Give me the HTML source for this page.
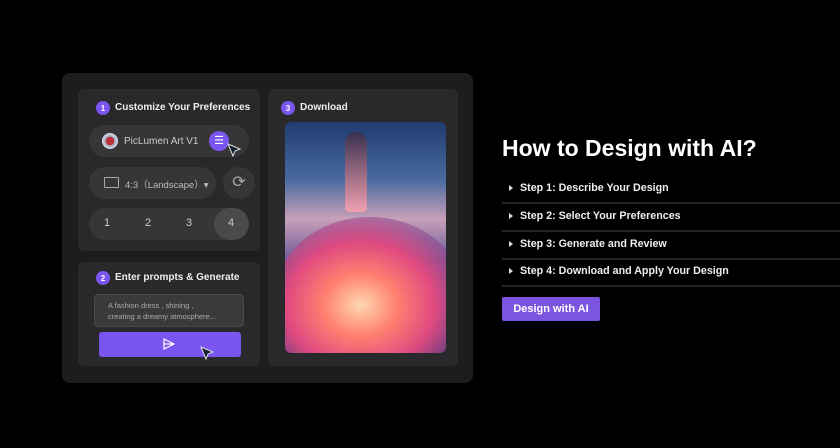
<!DOCTYPE html>
<html><head><style>
*{margin:0;padding:0;box-sizing:border-box}
body{width:840px;height:448px;background:#000;font-family:"Liberation Sans",sans-serif;position:relative;overflow:hidden;color:#fff}
.a{position:absolute}
.panel{left:62px;top:73px;width:411px;height:310px;background:#1d1d1f;border-radius:8px}
.card{background:#29292b;border-radius:6px}
.num{width:14px;height:14px;border-radius:50%;background:#7b55f0;font-size:8px;font-weight:bold;display:flex;align-items:center;justify-content:center}
.lbl{font-size:10px;font-weight:bold;color:#eee}
.pill{background:#363638;border-radius:18px;color:#bbb;font-size:10px}
.step{left:509px;font-size:10.7px;font-weight:bold;color:#eee}
.step:before{content:"";position:absolute;left:0;top:3px;border-left:4px solid #ddd;border-top:3px solid transparent;border-bottom:3px solid transparent}
.step span{margin-left:11px}
.line{left:502px;width:338px;height:2px;background:#252527}
</style></head><body>
<div class="a panel"></div>
<div class="a card" style="left:78px;top:89px;width:182px;height:162px"></div>
<div class="a card" style="left:78px;top:262px;width:182px;height:104px"></div>
<div class="a card" style="left:268px;top:89px;width:190px;height:277px"></div>

<div class="a num" style="left:96px;top:101px">1</div>
<div class="a lbl" style="left:115px;top:102px">Customize Your Preferences</div>
<div class="a pill" style="left:89px;top:125px;width:160px;height:32px"></div>
<div class="a" style="left:102px;top:133px;width:16px;height:16px;border-radius:50%;background:radial-gradient(circle,#c0303a 35%,#9ab 40%,#dde 70%)"></div>
<div class="a" style="left:124px;top:136px;font-size:10px;color:#ccc">PicLumen Art V1</div>
<div class="a" style="left:209px;top:131px;width:20px;height:20px;border-radius:50%;background:#7b55f0;color:#fff;font-size:11px;text-align:center;line-height:20px">☰</div>
<svg class="a" style="left:226px;top:142px" width="16" height="16" viewBox="0 0 16 16"><path d="M2 2L14 7L9 9L7 14Z" fill="#123" stroke="#ddd" stroke-width="1"/></svg>
<div class="a pill" style="left:89px;top:167px;width:127px;height:32px"></div>
<div class="a" style="left:104px;top:177px;width:15px;height:11px;border:1.5px solid #aaa;border-radius:1px"></div>
<div class="a" style="left:125px;top:177px;font-size:9.5px;color:#bbb">4:3（Landscape）▾</div>
<div class="a pill" style="left:223px;top:167px;width:32px;height:32px;text-align:center;line-height:32px;font-size:16px;color:#aaa">⟳</div>
<div class="a pill" style="left:89px;top:208px;width:160px;height:32px"></div>
<div class="a" style="left:214px;top:208px;width:35px;height:32px;border-radius:16px;background:#4a4a4c"></div>
<div class="a" style="left:104px;top:217px;font-size:11px;color:#ccc">1</div>
<div class="a" style="left:145px;top:217px;font-size:11px;color:#ccc">2</div>
<div class="a" style="left:186px;top:217px;font-size:11px;color:#ccc">3</div>
<div class="a" style="left:228px;top:217px;font-size:11px;color:#ccc">4</div>

<div class="a num" style="left:96px;top:271px">2</div>
<div class="a lbl" style="left:115px;top:272px">Enter prompts &amp; Generate</div>
<div class="a" style="left:94px;top:294px;width:150px;height:33px;background:#3a3a3c;border:1px solid #4a4a4c;border-radius:4px;font-size:7.5px;color:#aaa;padding:5px 0 0 13px;line-height:11px">A fashion dress , shining ,<br>creating a dreamy atmosphere...</div>
<div class="a" style="left:99px;top:332px;width:142px;height:25px;background:#7b55f0;border-radius:3px"></div>
<svg class="a" style="left:163px;top:338px" width="12" height="12" viewBox="0 0 12 12"><path d="M1 1L11 6L1 11Z M1 6H11" fill="none" stroke="#fff" stroke-width="1.2"/></svg>
<svg class="a" style="left:199px;top:345px" width="16" height="16" viewBox="0 0 16 16"><path d="M2 2L14 7L9 9L7 14Z" fill="#123" stroke="#ddd" stroke-width="1"/></svg>

<div class="a num" style="left:281px;top:101px">3</div>
<div class="a lbl" style="left:300px;top:102px">Download</div>
<div class="a" style="left:285px;top:122px;width:161px;height:231px;border-radius:6px;overflow:hidden;background:linear-gradient(180deg,#1f3c70 0%,#4a6aa0 25%,#c8a0b8 42%,#6a5a98 60%,#2c2f6a 100%)">
 <div class="a" style="left:-10px;top:95px;width:190px;height:160px;border-radius:50% 50% 0 0;background:radial-gradient(ellipse at 45% 55%,#ffd8b0 0%,#ff8070 25%,#e04a80 50%,rgba(120,70,150,0.5) 75%,rgba(60,50,120,0) 90%)"></div>
 <div class="a" style="left:60px;top:10px;width:22px;height:80px;border-radius:11px 11px 4px 4px;background:linear-gradient(#3a3050,#f0a0b0)"></div>
</div>

<div class="a" style="left:502px;top:135px;font-size:23px;font-weight:bold">How to Design with AI?</div>
<div class="a step" style="top:182px"><span>Step 1: Describe Your Design</span></div>
<div class="a line" style="top:202px"></div>
<div class="a step" style="top:210px"><span>Step 2: Select Your Preferences</span></div>
<div class="a line" style="top:230px"></div>
<div class="a step" style="top:238px"><span>Step 3: Generate and Review</span></div>
<div class="a line" style="top:258px"></div>
<div class="a step" style="top:265px"><span>Step 4: Download and Apply Your Design</span></div>
<div class="a line" style="top:285px"></div>
<div class="a" style="left:502px;top:297px;width:98px;height:24px;background:#7b55e0;border-radius:2px;font-size:11px;font-weight:bold;text-align:center;line-height:24px">Design with AI</div>
</body></html>
